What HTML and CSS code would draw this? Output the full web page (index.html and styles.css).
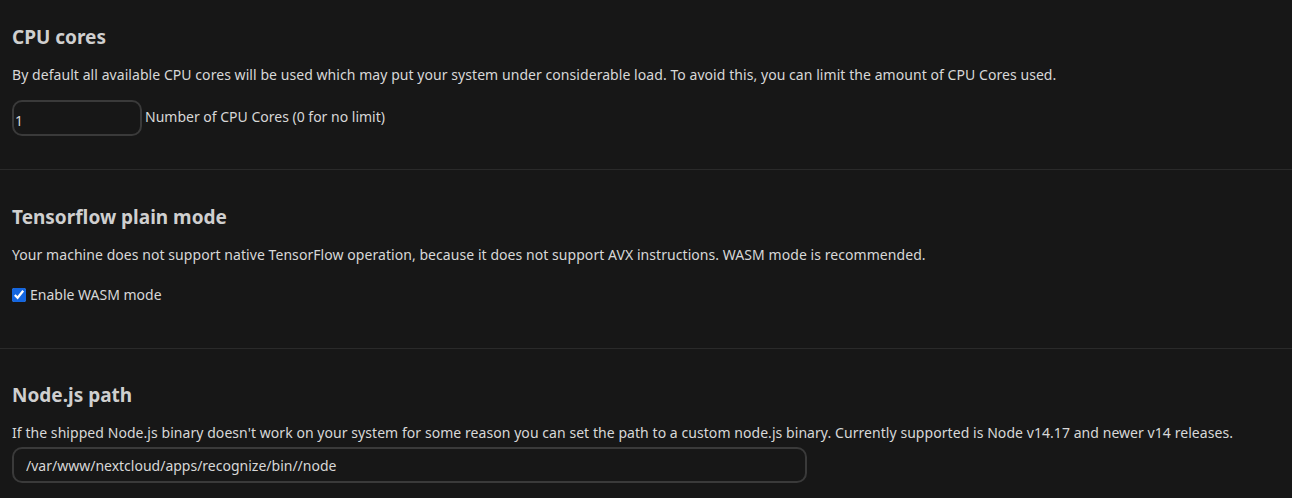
FILE: index.html
```html
<!DOCTYPE html>
<html lang="en">
<head>
<meta charset="utf-8">
<title>Recognize settings</title>
<link rel="stylesheet" href="styles.css">
</head>
<body>
<div class="settings">
  <section class="section section--first">
    <h2 class="section__title">CPU cores</h2>
    <p class="section__desc">By default all available CPU cores will be used which may put your system under considerable load. To avoid this, you can limit the amount of CPU Cores used.</p>
    <div class="field-row">
      <input class="text-input text-input--cores" type="number" value="1">
      <label class="field-label field-label--raised">Number of CPU Cores (0 for no limit)</label>
    </div>
  </section>
  <section class="section section--middle">
    <h2 class="section__title">Tensorflow plain mode</h2>
    <p class="section__desc">Your machine does not support native TensorFlow operation, because it does not support AVX instructions. WASM mode is recommended.</p>
    <label class="check-row">
      <input class="checkbox" type="checkbox" checked>
      <span class="field-label">Enable WASM mode</span>
    </label>
  </section>
  <section class="section section--last">
    <h2 class="section__title">Node.js path</h2>
    <p class="section__desc section__desc--tight">If the shipped Node.js binary doesn't work on your system for some reason you can set the path to a custom node.js binary. Currently supported is Node v14.17 and newer v14 releases.</p>
    <input class="text-input text-input--path" type="text" value="/var/www/nextcloud/apps/recognize/bin//node">
  </section>
</div>
</body>
</html>
```

FILE: styles.css
```css
html, body {
  margin: 0;
  padding: 0;
  background: #171717;
}

body {
  font-family: "Noto Sans", "Open Sans", sans-serif;
  font-size: 14px;
  color: #d2d2d2;
  overflow: hidden;
}

.settings {
  display: flex;
  flex-direction: column;
}

.section {
  padding: 31px 12px 41px;
  border-bottom: 1px solid #2a2a2a;
  display: flex;
  flex-direction: column;
  align-items: flex-start;
}

.section--first {
  padding-top: 22px;
  padding-bottom: 33px;
}

.section--middle {
  padding-top: 32px;
  padding-bottom: 43px;
}

.section--last {
  border-bottom: none;
  padding-bottom: 20px;
}

.section__title {
  margin: 0;
  font-size: 19px;
  line-height: 30px;
  font-weight: 700;
  color: #cfcfcf;
}

.section__desc {
  margin: 13px 0 15px;
  line-height: 20px;
  color: #d8d8d8;
  letter-spacing: 0.06px;
}

.section__desc--tight {
  margin-bottom: 4px;
}

.field-row {
  display: flex;
  align-items: center;
  gap: 3px;
}

.field-label {
  line-height: 20px;
  color: #d8d8d8;
}

.field-label--raised {
  margin-bottom: 3px;
}

.text-input {
  box-sizing: border-box;
  height: 36px;
  border: 2px solid #3a3a3a;
  border-radius: 10px;
  background: #171717;
  color: #d8d8d8;
  font-family: inherit;
  font-size: 14px;
  outline: none;
  margin: 0;
}

.text-input--cores {
  width: 130px;
  padding: 4px 0 0 1px;
  -moz-appearance: textfield;
}

.text-input--cores::-webkit-inner-spin-button,
.text-input--cores::-webkit-outer-spin-button {
  -webkit-appearance: none;
  margin: 0;
}

.text-input--path {
  width: 795px;
  padding: 0 12px;
}

.check-row {
  margin-top: 5px;
  display: flex;
  align-items: center;
  gap: 4px;
}

.checkbox {
  width: 14px;
  height: 14px;
  margin: 0;
  accent-color: #1466e0;
}
```
